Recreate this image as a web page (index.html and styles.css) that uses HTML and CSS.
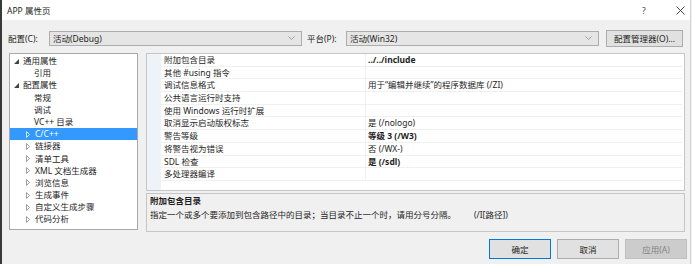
FILE: index.html
```html
<!DOCTYPE html>
<html lang="zh-CN">
<head>
  <meta charset="UTF-8">
  <title>APP 属性页</title>
  <link rel="stylesheet" href="styles.css">
</head>
<body>
  <div class="dialog">
    <div class="titlebar">
      <span class="title">APP 属性页</span>
      <span class="help">?</span>
      <span class="close">
        <svg width="9" height="9" viewBox="0 0 9 9"><path d="M0.5 0.5 L8.5 8.5 M8.5 0.5 L0.5 8.5" stroke="#333" stroke-width="0.9" fill="none"/></svg>
      </span>
    </div>

    <div class="config-row">
      <label class="lbl lbl-config">配置(C):</label>
      <div class="combo combo-config">
        <span>活动(Debug)</span>
        <svg class="chev" width="7" height="4" viewBox="0 0 7 4"><path d="M0.5 0.5 L3.5 3.5 L6.5 0.5" stroke="#8a8a8a" stroke-width="0.8" fill="none"/></svg>
      </div>
      <label class="lbl lbl-platform">平台(P):</label>
      <div class="combo combo-platform">
        <span>活动(Win32)</span>
        <svg class="chev" width="7" height="4" viewBox="0 0 7 4"><path d="M0.5 0.5 L3.5 3.5 L6.5 0.5" stroke="#8a8a8a" stroke-width="0.8" fill="none"/></svg>
      </div>
      <button class="btn btn-manager">配置管理器(O)...</button>
    </div>

    <div class="main">
      <div class="tree">
        <div class="node top"><svg class="arr" width="5" height="5" viewBox="0 0 5 5"><path d="M5 0 L5 5 L0 5 Z" fill="#444"/></svg>通用属性</div>
        <div class="node child">引用</div>
        <div class="node top"><svg class="arr" width="5" height="5" viewBox="0 0 5 5"><path d="M5 0 L5 5 L0 5 Z" fill="#444"/></svg>配置属性</div>
        <div class="node child">常规</div>
        <div class="node child">调试</div>
        <div class="node child">VC++ 目录</div>
        <div class="node child closed selected"><svg class="arr" width="4" height="7" viewBox="0 0 4 7"><path d="M0.5 0.5 L3.5 3.5 L0.5 6.5 Z" stroke="#fff" stroke-width="0.8" fill="none"/></svg>C/C++</div>
        <div class="node child closed"><svg class="arr" width="4" height="7" viewBox="0 0 4 7"><path d="M0.5 0.5 L3.5 3.5 L0.5 6.5 Z" stroke="#888" stroke-width="0.8" fill="none"/></svg>链接器</div>
        <div class="node child closed"><svg class="arr" width="4" height="7" viewBox="0 0 4 7"><path d="M0.5 0.5 L3.5 3.5 L0.5 6.5 Z" stroke="#888" stroke-width="0.8" fill="none"/></svg>清单工具</div>
        <div class="node child closed"><svg class="arr" width="4" height="7" viewBox="0 0 4 7"><path d="M0.5 0.5 L3.5 3.5 L0.5 6.5 Z" stroke="#888" stroke-width="0.8" fill="none"/></svg>XML 文档生成器</div>
        <div class="node child closed"><svg class="arr" width="4" height="7" viewBox="0 0 4 7"><path d="M0.5 0.5 L3.5 3.5 L0.5 6.5 Z" stroke="#888" stroke-width="0.8" fill="none"/></svg>浏览信息</div>
        <div class="node child closed"><svg class="arr" width="4" height="7" viewBox="0 0 4 7"><path d="M0.5 0.5 L3.5 3.5 L0.5 6.5 Z" stroke="#888" stroke-width="0.8" fill="none"/></svg>生成事件</div>
        <div class="node child closed"><svg class="arr" width="4" height="7" viewBox="0 0 4 7"><path d="M0.5 0.5 L3.5 3.5 L0.5 6.5 Z" stroke="#888" stroke-width="0.8" fill="none"/></svg>自定义生成步骤</div>
        <div class="node child closed"><svg class="arr" width="4" height="7" viewBox="0 0 4 7"><path d="M0.5 0.5 L3.5 3.5 L0.5 6.5 Z" stroke="#888" stroke-width="0.8" fill="none"/></svg>代码分析</div>
      </div>

      <div class="right">
        <div class="grid">
          <div class="row"><span class="gutter"></span><span class="name">附加包含目录</span><span class="value bold">../../include</span></div>
          <div class="row"><span class="gutter"></span><span class="name">其他 #using 指令</span><span class="value"></span></div>
          <div class="row"><span class="gutter"></span><span class="name">调试信息格式</span><span class="value">用于“编辑并继续”的程序数据库 (/ZI)</span></div>
          <div class="row"><span class="gutter"></span><span class="name">公共语言运行时支持</span><span class="value"></span></div>
          <div class="row"><span class="gutter"></span><span class="name">使用 Windows 运行时扩展</span><span class="value"></span></div>
          <div class="row"><span class="gutter"></span><span class="name">取消显示启动版权标志</span><span class="value">是 (/nologo)</span></div>
          <div class="row"><span class="gutter"></span><span class="name">警告等级</span><span class="value bold">等级 3 (/W3)</span></div>
          <div class="row"><span class="gutter"></span><span class="name">将警告视为错误</span><span class="value">否 (/WX-)</span></div>
          <div class="row"><span class="gutter"></span><span class="name">SDL 检查</span><span class="value bold">是 (/sdl)</span></div>
          <div class="row"><span class="gutter"></span><span class="name">多处理器编译</span><span class="value"></span></div>
          <div class="grid-rest"><span class="gutter"></span></div>
        </div>
        <div class="desc">
          <div class="desc-title">附加包含目录</div>
          <div class="desc-text">指定一个或多个要添加到包含路径中的目录；当目录不止一个时，请用分号分隔。<span class="switch">(/I[路径])</span></div>
        </div>
      </div>
    </div>

    <div class="footer">
      <button class="btn btn-ok">确定</button>
      <button class="btn">取消</button>
      <button class="btn btn-disabled">应用(A)</button>
    </div>
  </div>
</body>
</html>
```

FILE: styles.css
```css
body {
  margin: 0;
  width: 692px;
  height: 264px;
  overflow: hidden;
  background: #f0f0f0;
  font-family: 'Noto Sans', 'Noto Sans CJK SC', sans-serif;
  font-size: 8.5px;
  color: #1e1e1e;
}
.dialog {
  height: 264px;
  border-left: 2px solid #3a3a3a;
  border-right: 1px solid #d4d4d4;
  box-sizing: border-box;
  width: 691px;
}
.titlebar {
  height: 20px;
  background: #fff;
  display: flex;
  align-items: center;
  padding-left: 5px;
}
.title { flex: 1; font-size: 8.5px; }
.help { width: 34px; color: #444; }
.close { width: 14px; display: flex; }

.config-row {
  display: flex;
  align-items: center;
  margin-top: 10px;
  padding-left: 6px;
  height: 16px;
}
.lbl { display: block; }
.lbl-config { width: 41px; }
.lbl-platform { width: 39px; margin-left: 5px; }
.combo {
  width: 253px;
  height: 15px;
  box-sizing: border-box;
  border: 1px solid #adadad;
  background: #e5e5e5;
  display: flex;
  align-items: center;
  padding-left: 3px;
  padding-right: 6px;
}
.combo span { flex: 1; }
.btn {
  font-family: inherit;
  font-size: 8.5px;
  color: #1e1e1e;
  background: #e1e1e1;
  border: 1px solid #adadad;
  padding: 0;
  box-sizing: border-box;
}
.btn-manager {
  width: 77px;
  height: 17px;
  margin-left: 7px;
}

.main {
  display: flex;
  margin-top: 7px;
  padding-left: 7px;
}
.tree {
  width: 129px;
  height: 177px;
  box-sizing: border-box;
  border: 1px solid #a9a9a9;
  background: #fff;
  padding-top: 1px;
}
.node {
  height: 12.2px;
  line-height: 12.2px;
  display: flex;
  align-items: center;
  white-space: nowrap;
}
.node .arr { margin-right: 4px; }
.node.top { padding-left: 4px; }
.node.child { padding-left: 24px; }
.node.closed { padding-left: 16px; }
.node.closed .arr { margin-right: 5px; }
.node.selected { background: #3399ff; color: #fff; }

.right {
  width: 539px;
  margin-left: 8px;
  display: flex;
  flex-direction: column;
}
.grid {
  height: 138px;
  box-sizing: border-box;
  border: 1px solid #c6c6c6;
  background: #fff;
  display: flex;
  flex-direction: column;
}
.row {
  height: 12.7px;
  display: flex;
  line-height: 12.7px;
}
.gutter {
  width: 14px;
  background: #eef2f9;
  flex: none;
}
.name {
  width: 205px;
  padding-left: 3px;
  box-sizing: border-box;
  border-bottom: 1px solid #f0f0f0;
  border-right: 1px solid #f0f0f0;
  line-height: 11.7px;
}
.value {
  flex: 1;
  padding-left: 2px;
  border-bottom: 1px solid #f0f0f0;
  line-height: 11.7px;
  margin-right: 2px;
}
.bold { font-weight: bold; }
.grid-rest { flex: 1; display: flex; }

.desc {
  margin-top: 2px;
  height: 39px;
  box-sizing: border-box;
  border: 1px solid #c6c6c6;
  background: #f0f0f0;
  padding: 1px 3px;
}
.desc-title { font-weight: bold; line-height: 12px; }
.desc-text { line-height: 13px; margin-top: 1px; }
.switch { margin-left: 18px; }

.footer {
  display: flex;
  justify-content: flex-end;
  gap: 6px;
  margin-top: 7px;
  padding-right: 3px;
}
.footer .btn {
  width: 62px;
  height: 20px;
}
.btn-ok { border-color: #0078d7; }
.btn-disabled { background: #cccccc; border-color: #bfbfbf; color: #838383; }
```
